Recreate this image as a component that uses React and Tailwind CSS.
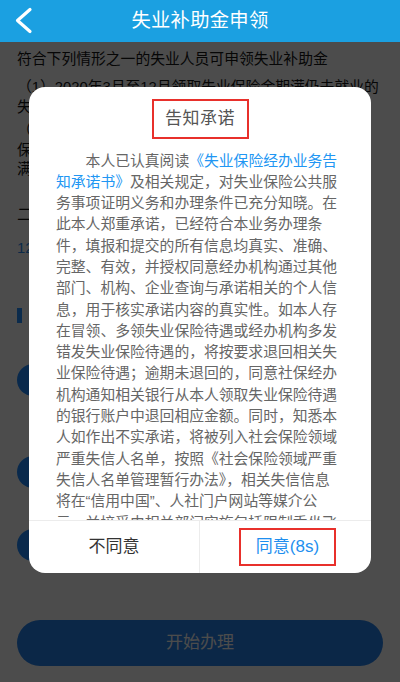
import React from "react";

const FONT = "font-['Liberation_Sans','Noto_Sans_CJK_SC',sans-serif]";

function Header() {
  return (
    <div className="h-[42px] bg-[#1ba0e1] grid grid-cols-[42px_1fr_42px] items-center">
      <div className="flex items-center justify-center">
        <svg width="26" height="40" viewBox="0 0 26 40" className="ml-[-2px]">
          <polyline points="23,8.5 10.5,19.5 23,30.5" fill="none" stroke="#fff" strokeWidth="3.2" strokeLinecap="round" strokeLinejoin="round" />
        </svg>
      </div>
      <div className="text-center text-white text-[19.3px] leading-none tracking-[0.3px]">失业补助金申领</div>
      <div />
    </div>
  );
}

function Page() {
  return (
    <div className="px-[17px] pt-[8px] text-[14.8px] leading-[19.5px] text-[#151515]">
      <p>符合下列情形之一的失业人员可申领失业补助金</p>
      <p className="mt-[8.5px]">
        （1）2020年3月至12月领取失业保险金期满仍未就业的
        <br />
        失业人员；
      </p>
      <p className="mt-[4px]">
        （2）2019年1月1日之后累计缴费不满1年的失业参
        <br />
        保人员，按月领取失业补助金，期限最长不超过6个月，
        <br />
        满足条件的可申领。
      </p>
      <p className="mt-[25px] text-[16px] leading-[20px]">二、申领流程</p>
      <p className="mt-[14px] text-[#2a8df0]">12月31日前均可办理申领</p>
      <div className="mt-[48px] flex items-center gap-2">
        <div className="w-[5px] h-[15px] bg-[#2590ff]" />
        <span>办理步骤</span>
      </div>
      <div className="mt-[38px] flex items-center gap-3">
        <div className="w-[32px] h-[32px] rounded-full bg-[#1f8bff] text-white flex items-center justify-center">1</div>
        <span>登录并填写个人信息</span>
      </div>
      <div className="mt-[60px] flex items-center gap-3">
        <div className="w-[32px] h-[32px] rounded-full bg-[#1f8bff] text-white flex items-center justify-center">2</div>
        <span>提交申领信息</span>
      </div>
      <div className="mt-[41px] flex items-center gap-3">
        <div className="w-[32px] h-[32px] rounded-full bg-[#1f8bff] text-white flex items-center justify-center">3</div>
        <span>等待审核结果</span>
      </div>
      <div className="mt-[59px] h-[46px] rounded-full bg-[#2582ed] flex items-center justify-center text-white text-[17px]">
        开始办理
      </div>
    </div>
  );
}

function Modal() {
  return (
    <div className="w-[342px] h-[486px] bg-white rounded-[16px] flex flex-col overflow-hidden">
      <div className="pt-[12px] flex justify-center">
        <div className="w-[97px] h-[40px] border-2 border-[#e8302b] flex items-center justify-center text-[17px] text-[#555] tracking-[0.5px]">
          告知承诺
        </div>
      </div>
      <div className="flex-1 overflow-hidden pt-[11.5px] pl-[27px] pr-[27px]">
        <p className="indent-[2em] text-[14.8px] leading-[21.3px] text-[#666] text-left">
          本人已认真阅读<span className="text-[#2196f3]">《失业保险经办业务告知承诺书》</span>及相关规定，对失业保险公共服务事项证明义务和办理条件已充分知晓。在此本人郑重承诺，已经符合本业务办理条件，填报和提交的所有信息均真实、准确、完整、有效，并授权同意经办机构通过其他部门、机构、企业查询与承诺相关的个人信息，用于核实承诺内容的真实性。如本人存在冒领、多领失业保险待遇或经办机构多发错发失业保险待遇的，将按要求退回相关失业保险待遇；逾期未退回的，同意社保经办机构通知相关银行从本人领取失业保险待遇的银行账户中退回相应金额。同时，知悉本人如作出不实承诺，将被列入社会保险领域严重失信人名单，按照《社会保险领域严重失信人名单管理暂行办法》，相关失信信息将在“信用中国”、人社门户网站等媒介公示，并接受由相关部门实施包括限制乘坐飞机、高铁等联合惩戒。
        </p>
      </div>
      <div className="h-[53px] border-t border-[#ececec] grid grid-cols-2">
        <div className="flex items-center justify-center text-[17px] text-[#333] border-r border-[#ececec]">不同意</div>
        <div className="flex items-center justify-center pl-[4px]">
          <div className="w-[97px] h-[38px] border-2 border-[#e8302b] flex items-center justify-center text-[17px] text-[#1e8fef]">
            同意(8s)
          </div>
        </div>
      </div>
    </div>
  );
}

export default function App() {
  return (
    <div className={`relative w-[400px] h-[682px] overflow-hidden bg-white ${FONT}`}>
      <Header />
      <Page />
      <div className="absolute left-0 right-0 top-[42px] bottom-0 bg-black/70 flex justify-center pt-[45px]">
        <Modal />
      </div>
    </div>
  );
}
